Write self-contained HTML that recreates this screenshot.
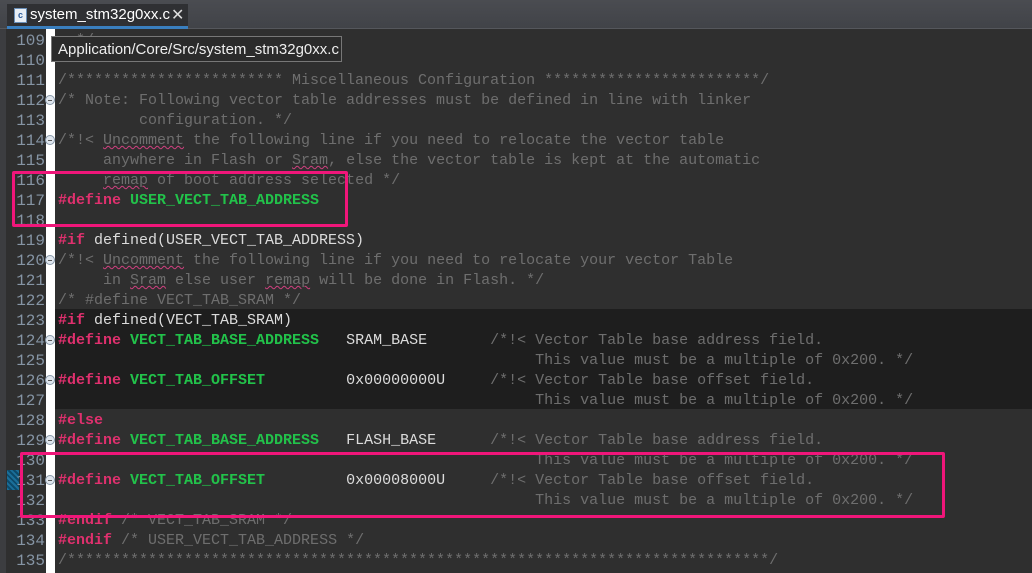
<!DOCTYPE html>
<html><head><meta charset="utf-8"><style>
body{margin:0;width:1032px;height:573px;overflow:hidden;background:#2f2f2f;position:relative;font-family:"Liberation Mono",monospace;}
.tabbar{position:absolute;left:0;top:0;width:1032px;height:28px;background:linear-gradient(#4a4c51,#414348);border-bottom:1px solid #55575c;}
.tab{position:absolute;left:7px;top:4px;width:181px;height:22px;background:#2f3033;border-bottom:3px solid #3a7fbf;color:#fff;font:15px "Liberation Sans",sans-serif;}
.tab .ic{position:absolute;left:7px;top:4px;width:11px;height:13px;background:#e8eef5;border:1px solid #6a8fb8;font:bold 9px "Liberation Sans";color:#2a5a9a;text-align:center;line-height:13px;}
.tab .t{position:absolute;left:23px;top:2px;}
.tab .x{position:absolute;left:164px;top:1px;color:#ddd;font-size:16px;}
.lstrip{position:absolute;left:0;top:29px;width:6px;height:544px;background:#3c3d40;}
.wstrip{position:absolute;left:46px;top:29px;width:9px;height:544px;background:#fff;}
.dark{position:absolute;left:55px;top:309px;width:977px;height:100px;background:#1e1e1e;}
.ln{position:absolute;left:0;width:45px;text-align:right;font-size:16px;color:#8594a4;line-height:20px;margin-top:2px;}
.code{position:absolute;left:58px;font-size:15px;line-height:20px;white-space:pre;color:#dcdcdc;}
.c{color:#6e6e6e}.k{color:#e0306e;font-weight:bold}.g{color:#22c24a;font-weight:bold}
.u{text-decoration:underline wavy #d04080;text-decoration-thickness:1px;}
.fold{position:absolute;left:45px;width:8px;height:8px;border:1px solid #8a9aab;border-radius:50%;background:#dfe6ee;}
.fold:after{content:"";position:absolute;left:2px;top:3.5px;width:4px;height:1px;background:#555;}
.box{position:absolute;border:3px solid #f0167a;border-radius:2px;}
.tip{position:absolute;left:51px;top:36px;width:291px;height:26px;background:#2b2b2b;border:1px solid #777;color:#eee;font:15px "Liberation Sans",sans-serif;line-height:26px;padding-left:6px;box-sizing:border-box;}
.mark{position:absolute;left:7px;top:470px;width:12px;height:20px;background:repeating-linear-gradient(45deg,#1a6f9a 0 2px,#0d4a6a 2px 4px);}
</style></head><body>
<div class="tabbar"><div class="tab"><span class="ic">c</span><span class="t">system_stm32g0xx.c</span><span class="x">✕</span></div></div>
<div class="lstrip"></div>
<div class="dark"></div>
<div class="wstrip"></div>
<div class="mark"></div>
<div class="ln" style="top:29px">109</div><div class="ln" style="top:49px">110</div><div class="ln" style="top:69px">111</div><div class="ln" style="top:89px">112</div><div class="ln" style="top:109px">113</div><div class="ln" style="top:129px">114</div><div class="ln" style="top:149px">115</div><div class="ln" style="top:169px">116</div><div class="ln" style="top:189px">117</div><div class="ln" style="top:209px">118</div><div class="ln" style="top:229px">119</div><div class="ln" style="top:249px">120</div><div class="ln" style="top:269px">121</div><div class="ln" style="top:289px">122</div><div class="ln" style="top:309px">123</div><div class="ln" style="top:329px">124</div><div class="ln" style="top:349px">125</div><div class="ln" style="top:369px">126</div><div class="ln" style="top:389px">127</div><div class="ln" style="top:409px">128</div><div class="ln" style="top:429px">129</div><div class="ln" style="top:449px">130</div><div class="ln" style="top:469px">131</div><div class="ln" style="top:489px">132</div><div class="ln" style="top:509px">133</div><div class="ln" style="top:529px">134</div><div class="ln" style="top:549px">135</div>
<div class="fold" style="top:95px"></div><div class="fold" style="top:135px"></div><div class="fold" style="top:255px"></div><div class="fold" style="top:335px"></div><div class="fold" style="top:375px"></div><div class="fold" style="top:435px"></div><div class="fold" style="top:475px"></div>
<div class="code" style="top:31px"><span class="c">  */</span>

<span class="c">/************************ Miscellaneous Configuration ************************/</span>
<span class="c">/* Note: Following vector table addresses must be defined in line with linker
         configuration. */</span>
<span class="c">/*!&lt; <span class="u">Uncomment</span> the following line if you need to relocate the vector table
     anywhere in Flash or <span class="u">Sram</span>, else the vector table is kept at the automatic
     <span class="u">remap</span> of boot address selected */</span>
<span class="k">#define</span> <span class="g">USER_VECT_TAB_ADDRESS</span>

<span class="k">#if</span> defined(USER_VECT_TAB_ADDRESS)
<span class="c">/*!&lt; <span class="u">Uncomment</span> the following line if you need to relocate your vector Table
     in <span class="u">Sram</span> else user <span class="u">remap</span> will be done in Flash. */</span>
<span class="c">/* #define VECT_TAB_SRAM */</span>
<span class="k">#if</span> defined(VECT_TAB_SRAM)
<span class="k">#define</span> <span class="g">VECT_TAB_BASE_ADDRESS</span>   SRAM_BASE       <span class="c">/*!&lt; Vector Table base address field.
                                                     This value must be a multiple of 0x200. */</span>
<span class="k">#define</span> <span class="g">VECT_TAB_OFFSET</span>         0x00000000U     <span class="c">/*!&lt; Vector Table base offset field.
                                                     This value must be a multiple of 0x200. */</span>
<span class="k">#else</span>
<span class="k">#define</span> <span class="g">VECT_TAB_BASE_ADDRESS</span>   FLASH_BASE      <span class="c">/*!&lt; Vector Table base address field.
                                                     This value must be a multiple of 0x200. */</span>
<span class="k">#define</span> <span class="g">VECT_TAB_OFFSET</span>         0x00008000U     <span class="c">/*!&lt; Vector Table base offset field.
                                                     This value must be a multiple of 0x200. */</span>
<span class="k">#endif</span> <span class="c">/* VECT_TAB_SRAM */</span>
<span class="k">#endif</span> <span class="c">/* USER_VECT_TAB_ADDRESS */</span>
<span class="c">/******************************************************************************/</span></div>
<div class="box" style="left:12px;top:171px;width:330px;height:50px"></div>
<div class="box" style="left:20px;top:452px;width:919px;height:60px"></div>
<div class="tip">Application/Core/Src/system_stm32g0xx.c</div>
</body></html>
